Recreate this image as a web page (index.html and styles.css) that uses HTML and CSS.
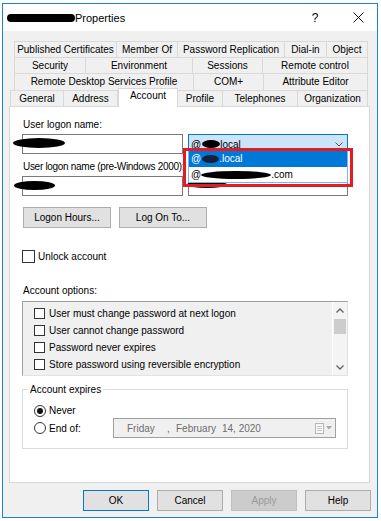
FILE: index.html
```html
<!DOCTYPE html>
<html lang="en">

<head>
    <meta charset="UTF-8">
    <meta name="viewport" content="width=device-width, initial-scale=1.0">
    <title>Properties</title>
    <link rel="stylesheet" href="styles.css">
</head>

<body>

    <div class="window">
        <div class="titlebar">
            <div class="title"><span class="blot title-blot"></span>Properties</div>
            <div class="title-help">?</div>
            <div class="title-close">
                <svg width="11" height="11" viewBox="0 0 11 11">
                    <path d="M0.5 0.5 L10.5 10.5 M10.5 0.5 L0.5 10.5" stroke="#111" stroke-width="1" fill="none" />
                </svg>
            </div>
        </div>

        <div class="dialog">
            <div class="tabs">
                <div class="tab-row row-1">
                    <div class="tab">Published Certificates</div>
                    <div class="tab">Member Of</div>
                    <div class="tab">Password Replication</div>
                    <div class="tab">Dial-in</div>
                    <div class="tab">Object</div>
                </div>
                <div class="tab-row row-2">
                    <div class="tab">Security</div>
                    <div class="tab">Environment</div>
                    <div class="tab">Sessions</div>
                    <div class="tab">Remote control</div>
                </div>
                <div class="tab-row row-3">
                    <div class="tab">Remote Desktop Services Profile</div>
                    <div class="tab">COM+</div>
                    <div class="tab">Attribute Editor</div>
                </div>
                <div class="tab-row row-4">
                    <div class="tab">General</div>
                    <div class="tab">Address</div>
                    <div class="tab active">Account</div>
                    <div class="tab">Profile</div>
                    <div class="tab">Telephones</div>
                    <div class="tab">Organization</div>
                </div>
            </div>

            <div class="panel">
                <div class="label">User logon name:</div>
                <div class="field-row">
                    <div class="textbox"></div>
                    <div class="combo">
                        <span>@</span><span class="blot combo-blot"></span><span>local</span>
                        <svg class="combo-arrow" width="8" height="5" viewBox="0 0 8 5">
                            <path d="M0.5 0.5 L4 4 L7.5 0.5" stroke="#555" fill="none" />
                        </svg>
                    </div>
                </div>

                <div class="label label-gap">User logon name (pre-Windows 2000):</div>
                <div class="field-row">
                    <div class="textbox"></div>
                    <div class="textbox right"></div>
                </div>

                <div class="button-row">
                    <button class="btn wide">Logon Hours...</button>
                    <button class="btn wide">Log On To...</button>
                </div>

                <div class="check-row unlock">
                    <span class="check"></span>
                    <span>Unlock account</span>
                </div>

                <div class="label options-label">Account options:</div>
                <div class="listbox">
                    <div class="list-items">
                        <div class="list-item"><span class="check small"></span>User must change password at next logon</div>
                        <div class="list-item"><span class="check small"></span>User cannot change password</div>
                        <div class="list-item"><span class="check small"></span>Password never expires</div>
                        <div class="list-item"><span class="check small"></span>Store password using reversible encryption</div>
                    </div>
                    <div class="scrollbar">
                        <div class="scroll-btn">
                            <svg width="8" height="5" viewBox="0 0 8 5">
                                <path d="M0.5 4.5 L4 1 L7.5 4.5" stroke="#606060" stroke-width="1.3" fill="none" />
                            </svg>
                        </div>
                        <div class="scroll-thumb"></div>
                        <div class="scroll-space"></div>
                        <div class="scroll-btn">
                            <svg width="8" height="5" viewBox="0 0 8 5">
                                <path d="M0.5 0.5 L4 4 L7.5 0.5" stroke="#606060" stroke-width="1.3" fill="none" />
                            </svg>
                        </div>
                    </div>
                </div>

                <fieldset class="group">
                    <legend>Account expires</legend>
                    <div class="radio-row never">
                        <span class="radio on"></span>
                        <span>Never</span>
                    </div>
                    <div class="radio-row">
                        <span class="radio"></span>
                        <span class="radio-label">End of:</span>
                        <div class="datepicker">
                            <span class="dp-day">Friday</span>
                            <span class="dp-comma">,</span>
                            <span class="dp-month">February</span>
                            <span>14, 2020</span>
                            <span class="dp-icons">
                                <svg width="9" height="11" viewBox="0 0 9 11">
                                    <rect x="0.5" y="0.5" width="8" height="10" fill="#f8f8f8" stroke="#b5b5b5" />
                                    <path d="M2 3.5 H7 M2 5.5 H7 M2 7.5 H7" stroke="#c8c8c8" />
                                </svg>
                                <svg width="6" height="4" viewBox="0 0 6 4">
                                    <path d="M0 0 H6 L3 3.5 Z" fill="#a8a8a8" />
                                </svg>
                            </span>
                        </div>
                    </div>
                </fieldset>

                <!-- redactions and the open dropdown lie over the form -->
                <span class="blot blot-1"></span>
                <span class="blot blot-2"></span>
                <span class="blot blot-3"></span>

                <div class="dropdown">
                    <div class="drop-item selected">@<span class="blot drop-blot-1"></span>.local</div>
                    <div class="drop-item">@<span class="blot drop-blot-2"></span>.com</div>
                </div>
                <div class="highlight"></div>
            </div>

            <div class="footer">
                <button class="btn default">OK</button>
                <button class="btn">Cancel</button>
                <button class="btn disabled">Apply</button>
                <button class="btn">Help</button>
            </div>
        </div>
    </div>

</body>

</html>
```

FILE: styles.css
```css
*,
*::before,
*::after {
    box-sizing: border-box;
}

body {
    margin: 0;
    background-color: #fff;
    font-family: "Liberation Sans", Arial, sans-serif;
    font-size: 10px;
    color: #000;
}

.window {
    margin: 3px 0 0 2px;
    width: 376px;
    height: 515px;
    border: 1px solid #1883d7;
    background-color: #f0f0f0;
    display: flex;
    flex-direction: column;
}

/* title bar */

.titlebar {
    height: 27px;
    flex-shrink: 0;
    background-color: #fff;
    display: flex;
    align-items: center;
}

.title {
    flex: 1;
    padding-left: 4px;
    font-size: 11px;
    display: flex;
    align-items: center;
}

.title-help {
    width: 48px;
    text-align: center;
    font-size: 12px;
}

.title-close {
    width: 38px;
    display: flex;
    justify-content: center;
}

.blot {
    display: inline-block;
    background-color: #000;
    border-radius: 50%;
}

.title-blot {
    width: 68px;
    height: 8px;
    border-radius: 4px;
}

/* tabs */

.dialog {
    flex: 1;
    padding: 10px 7px 0 6px;
}

.tab-row {
    display: grid;
    height: 16px;
    margin-left: 5px;
    width: 354px;
}

.row-1 {
    grid-template-columns: 103px 61px 107px 42px 41px;
}

.row-2 {
    grid-template-columns: 72px 107px 70px 105px;
}

.row-3 {
    height: 17px;
    grid-template-columns: 180px 70px 104px;
}

.row-4 {
    margin-left: 1px;
    width: 358px;
    grid-template-columns: 54px 54px 60px 45px 75px 70px;
}

.tab {
    border: 1px solid #d9d9d9;
    border-left: none;
    border-bottom: none;
    background-color: #f0f0f0;
    text-align: center;
    line-height: 15px;
    white-space: nowrap;
    overflow: hidden;
}

.tab:first-child {
    border-left: 1px solid #d9d9d9;
}

.tab.active {
    position: relative;
    z-index: 2;
    margin-top: -2px;
    height: 19px;
    background-color: #fff;
    border-left: 1px solid #d9d9d9;
    line-height: 14px;
}

/* account panel */

.panel {
    position: relative;
    height: 377px;
    background-color: #fff;
    border: 1px solid #d9d9d9;
    padding: 11px 0 0 12px;
}

.label {
    height: 13px;
    line-height: 13px;
    padding-left: 1px;
    white-space: nowrap;
}

.label-gap {
    margin-top: 6px;
    letter-spacing: -0.3px;
}

.field-row {
    display: flex;
    gap: 5px;
    margin-top: 3px;
}

.textbox {
    width: 161px;
    height: 20px;
    border: 1px solid #7a7a7a;
    background-color: #fff;
}

.textbox.right {
    width: 160px;
}

.combo {
    width: 160px;
    height: 20px;
    border: 1px solid #0078d7;
    background-color: #cce4f7;
    display: flex;
    align-items: center;
    padding-left: 2px;
}

.combo-blot {
    width: 18px;
    height: 8px;
    margin: 0 0 0 1px;
}

.combo-arrow {
    margin-left: auto;
    margin-right: 4px;
}

.btn {
    height: 21px;
    padding: 0;
    border: 1px solid #adadad;
    background-color: #e1e1e1;
    font: inherit;
    color: #000;
}

.button-row {
    display: flex;
    gap: 8px;
    margin-top: 11px;
    padding-left: 1px;
}

.btn.wide {
    width: 88px;
}

.check-row {
    display: flex;
    align-items: center;
    gap: 3px;
    height: 13px;
}

.unlock {
    margin-top: 22px;
}

.check {
    width: 13px;
    height: 13px;
    border: 1px solid #333;
    background-color: #fff;
    flex-shrink: 0;
}

.check.small {
    width: 11px;
    height: 11px;
}

.options-label {
    margin-top: 21px;
}

.listbox {
    margin-top: 4px;
    width: 326px;
    height: 75px;
    border: 1px solid;
    border-color: #a0a0a0 #e3e3e3 #e3e3e3 #a0a0a0;
    background-color: #f0f0f0;
    display: flex;
}

.list-items {
    flex: 1;
    padding: 3px 0 0 11px;
}

.list-item {
    height: 17px;
    display: flex;
    align-items: center;
    gap: 4px;
    white-space: nowrap;
}

.scrollbar {
    width: 15px;
    display: flex;
    flex-direction: column;
    background-color: #f4f4f4;
    border-left: 1px solid #fff;
}

.scroll-btn {
    height: 16px;
    display: flex;
    align-items: center;
    justify-content: center;
}

.scroll-thumb {
    height: 15px;
    margin: 1px 1px 0 1px;
    background-color: #cdcdcd;
}

.scroll-space {
    flex: 1;
}

/* account expires */

.group {
    margin: 7px 0 0 0;
    width: 326px;
    border: 1px solid #dcdcdc;
    padding: 0 0 10px 5px;
    min-width: 0;
}

.group legend {
    padding: 0 2px;
    line-height: 13px;
}

.radio-row {
    display: flex;
    align-items: center;
    gap: 3px;
    margin-left: 6px;
    height: 20px;
    margin-top: 1px;
}

.radio-row.never {
    height: 13px;
    margin-top: 8px;
}

.radio {
    width: 12px;
    height: 12px;
    border: 1px solid #333;
    border-radius: 50%;
    background-color: #fff;
    display: flex;
    align-items: center;
    justify-content: center;
    flex-shrink: 0;
}

.radio.on::after {
    content: "";
    width: 6px;
    height: 6px;
    border-radius: 50%;
    background-color: #111;
}

.radio-label {
    width: 61px;
}

.datepicker {
    width: 223px;
    height: 20px;
    border: 1px solid #a0a0a0;
    background-color: #f0f0f0;
    color: #6d6d6d;
    display: flex;
    align-items: center;
    padding-left: 13px;
    white-space: nowrap;
}

.dp-day {
    width: 40px;
}

.dp-comma {
    width: 9px;
}

.dp-month {
    width: 46px;
}

.dp-icons {
    margin-left: auto;
    margin-right: 3px;
    display: flex;
    align-items: center;
    gap: 2px;
}

/* overlays on the form */

.blot-1 {
    position: absolute;
    left: 3px;
    top: 31px;
    width: 52px;
    height: 10px;
}

.blot-2 {
    position: absolute;
    left: 4px;
    top: 74px;
    width: 41px;
    height: 9px;
}

.blot-3 {
    position: absolute;
    left: 177px;
    top: 74px;
    width: 40px;
    height: 7px;
}

.dropdown {
    position: absolute;
    left: 178px;
    top: 43px;
    width: 160px;
    height: 33px;
    background-color: #fff;
    border: 1px solid #7eb4ea;
}

.drop-item {
    height: 15px;
    line-height: 15px;
    padding-left: 2px;
    font-size: 10px;
    white-space: nowrap;
    overflow: hidden;
}

.drop-item.selected {
    height: 16px;
    line-height: 16px;
    background-color: #0078d7;
    color: #fff;
}

.drop-blot-1 {
    width: 17px;
    height: 8px;
    margin-left: 1px;
    background-color: #14213d;
    vertical-align: -1px;
}

.drop-blot-2 {
    width: 70px;
    height: 8px;
    vertical-align: -1px;
}

.highlight {
    position: absolute;
    left: 173px;
    top: 41px;
    width: 170px;
    height: 39px;
    border: 3px solid #e51b24;
}

/* bottom buttons */

.footer {
    display: flex;
    justify-content: flex-end;
    gap: 8px;
    margin-top: 7px;
    margin-right: -1px;
}

.footer .btn {
    width: 66px;
}

.btn.default {
    border-color: #0078d7;
}

.btn.disabled {
    background-color: #cccccc;
    border-color: #bfbfbf;
    color: #9a9a9a;
}
```
